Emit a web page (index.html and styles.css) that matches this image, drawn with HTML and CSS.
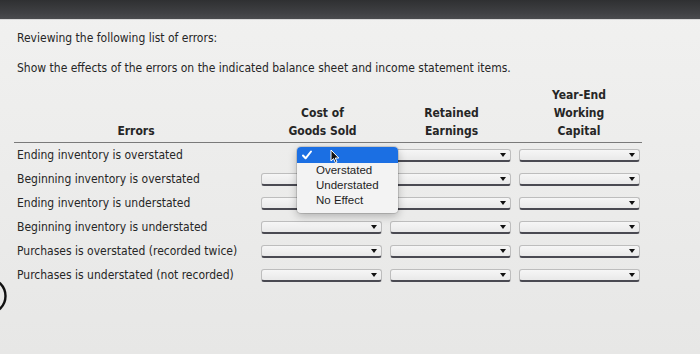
FILE: index.html
```html
<!DOCTYPE html>
<html lang="en">
<head>
<meta charset="utf-8">
<title>Inventory errors</title>
<link rel="stylesheet" href="styles.css">
</head>
<body>
<div class="topbar"></div>
<main class="page">
  <p class="intro">Reviewing the following list of errors:</p>
  <p class="intro second">Show the effects of the errors on the indicated balance sheet and income statement items.</p>

  <div class="table">
    <div class="head first">Errors</div>
    <div class="head">Cost of<br>Goods Sold</div>
    <div class="head">Retained<br>Earnings</div>
    <div class="head">Year-End<br>Working<br>Capital</div>

    <div class="cell label">Ending inventory is overstated</div>
    <div class="cell open">
      <div class="menu">
        <div class="menu-sel">
          <svg class="check" width="12" height="12" viewBox="0 0 12 12"><path d="M2 6.5 L4.6 9.3 L10 2.5" fill="none" stroke="#fff" stroke-width="2" stroke-linecap="round" stroke-linejoin="round"/></svg>
          <svg class="cursor" width="10" height="15" viewBox="0 0 10 15"><path d="M1 1 L1 12 L3.6 9.6 L5.4 13.8 L7 13.1 L5.3 9 L8.8 9 Z" fill="#111" stroke="#fff" stroke-width="1"/></svg>
        </div>
        <div class="menu-item">Overstated</div>
        <div class="menu-item">Understated</div>
        <div class="menu-item">No Effect</div>
      </div>
    </div>
    <div class="cell"><div class="select"></div></div>
    <div class="cell"><div class="select"></div></div>

    <div class="cell label">Beginning inventory is overstated</div>
    <div class="cell"><div class="select"></div></div>
    <div class="cell"><div class="select"></div></div>
    <div class="cell"><div class="select"></div></div>

    <div class="cell label">Ending inventory is understated</div>
    <div class="cell"><div class="select"></div></div>
    <div class="cell"><div class="select"></div></div>
    <div class="cell"><div class="select"></div></div>

    <div class="cell label">Beginning inventory is understated</div>
    <div class="cell"><div class="select"></div></div>
    <div class="cell"><div class="select"></div></div>
    <div class="cell"><div class="select"></div></div>

    <div class="cell label">Purchases is overstated (recorded twice)</div>
    <div class="cell"><div class="select"></div></div>
    <div class="cell"><div class="select"></div></div>
    <div class="cell"><div class="select"></div></div>

    <div class="cell label">Purchases is understated (not recorded)</div>
    <div class="cell"><div class="select"></div></div>
    <div class="cell"><div class="select"></div></div>
    <div class="cell"><div class="select"></div></div>
  </div>
</main>
<svg class="edge-arc" width="12" height="40" viewBox="0 0 12 40"><circle cx="-12" cy="17" r="17.5" fill="none" stroke="#111" stroke-width="2.4"/></svg>
</body>
</html>
```
FILE: styles.css
```css
html, body {
  margin: 0;
  padding: 0;
}
body {
  width: 700px;
  height: 354px;
  overflow: hidden;
  position: relative;
  background: linear-gradient(180deg, #f1f1f0 0%, #ececeb 50%, #e7e7e6 100%);
  font-family: "DejaVu Sans Condensed", "DejaVu Sans", Verdana, sans-serif;
  color: #262626;
}
.topbar {
  height: 19px;
  background: linear-gradient(180deg, #2f3032 0%, #404144 70%, #4a4b4e 100%);
  border-bottom: 1px solid #d8d8d8;
}
.page {
  padding: 0 0 0 17px;
}
.intro {
  margin: 0;
  font-size: 12px;
  line-height: 14px;
  padding-top: 11px;
}
.intro.second {
  padding-top: 16px;
}
.table {
  margin: 11px 0 0 -3px;
  width: 628px;
  display: grid;
  grid-template-columns: 244px 129px 129px 126px;
  grid-template-rows: auto repeat(6, 24px);
}
.head {
  display: flex;
  flex-direction: column;
  justify-content: flex-end;
  align-items: center;
  text-align: center;
  font-weight: bold;
  font-size: 12px;
  line-height: 18px;
  padding-bottom: 2px;
  border-bottom: 1px solid #7a7a7a;
}
.cell {
  display: flex;
  align-items: center;
  position: relative;
}
.label {
  padding-left: 3px;
  font-size: 12px;
}
.select {
  margin-left: 3px;
  width: 119px;
  height: 10px;
  box-sizing: content-box;
  border: 1px solid #bdbdbd;
  border-bottom: 2px solid #4a4a52;
  border-radius: 3px;
  background: linear-gradient(180deg, #f6f6f6, #e9e9e9);
  position: relative;
}
.select::after {
  content: "";
  position: absolute;
  right: 4px;
  top: 3px;
  border-left: 3px solid transparent;
  border-right: 3px solid transparent;
  border-top: 4px solid #111;
}
.menu {
  position: absolute;
  left: 39px;
  top: 4px;
  width: 101px;
  height: 66px;
  background: #f3f3f3;
  border-radius: 4px;
  box-shadow: 0 0 0 1px rgba(0,0,0,0.12), 0 3px 8px rgba(0,0,0,0.25);
  font-family: "Liberation Sans", Arial, sans-serif;
  font-size: 11.5px;
  color: #1e1e1e;
  z-index: 5;
}
.menu-sel {
  height: 16px;
  background: #1b6fe3;
  border-radius: 4px 4px 0 0;
  position: relative;
}
.check {
  position: absolute;
  left: 4px;
  top: 2px;
}
.cursor {
  position: absolute;
  left: 33px;
  top: 2px;
}
.menu-item {
  padding-left: 19px;
  line-height: 15px;
}
.menu-item:first-of-type {
  margin-top: 1px;
}
.edge-arc {
  position: absolute;
  left: 0;
  top: 279px;
}
```
